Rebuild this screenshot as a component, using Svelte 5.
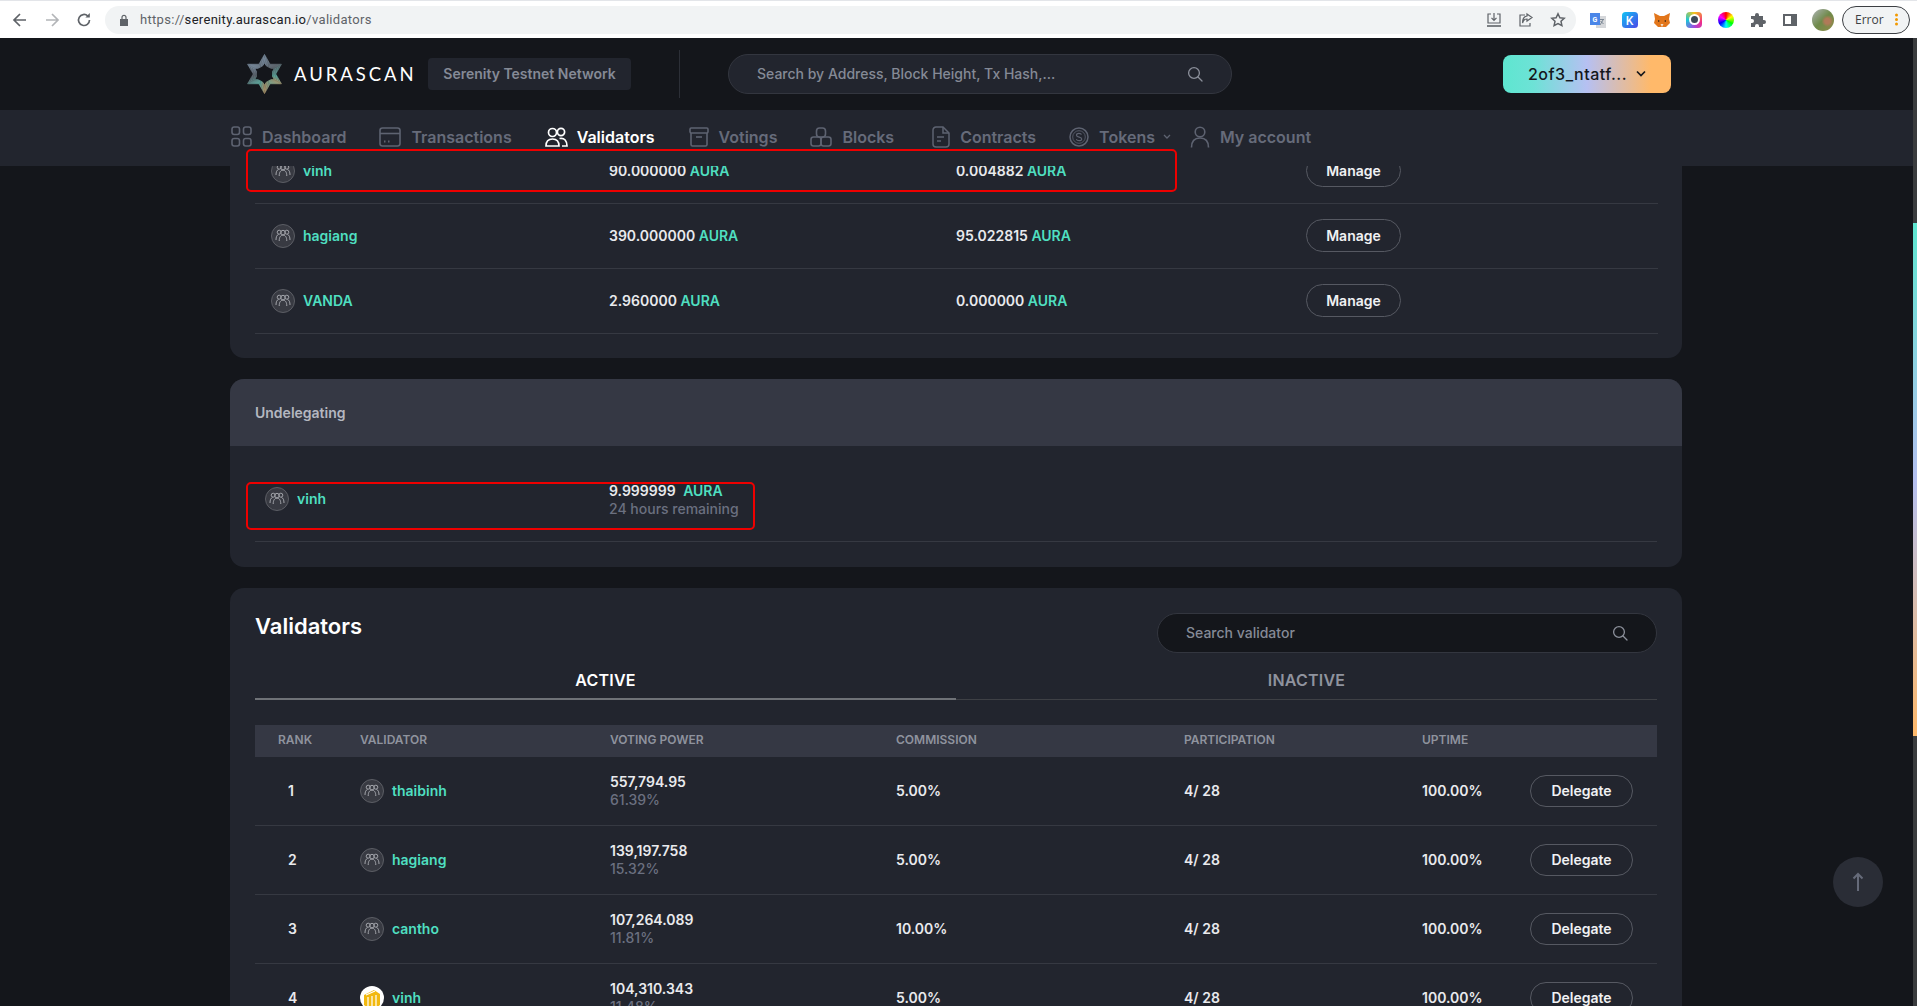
<script>
  const scales = [1, 0.94, 0.88, 0.82, 0.76, 0.7, 0.64, 0.58];
  const star = (s) => {
    const pts = [];
    for (let i = 0; i < 12; i++) {
      const r = (i % 2 === 0 ? 20 : 11.5) * s;
      const a = (Math.PI / 6) * i - Math.PI / 2;
      pts.push((20 + r * Math.cos(a)).toFixed(2) + ',' + (20 + r * Math.sin(a)).toFixed(2));
    }
    return pts.join(' ');
  };
  const delegations = [
    { name: 'vinh', amount: '90.000000', reward: '0.004882' },
    { name: 'hagiang', amount: '390.000000', reward: '95.022815' },
    { name: 'VANDA', amount: '2.960000', reward: '0.000000' }
  ];
  const validators = [
    { rank: 1, name: 'thaibinh', power: '557,794.95', pct: '61.39%', comm: '5.00%' },
    { rank: 2, name: 'hagiang', power: '139,197.758', pct: '15.32%', comm: '5.00%' },
    { rank: 3, name: 'cantho', power: '107,264.089', pct: '11.81%', comm: '10.00%' },
    { rank: 4, name: 'vinh', power: '104,310.343', pct: '11.48%', comm: '5.00%', gold: true }
  ];
</script>

{#snippet avatar(gold)}
  {#if gold}
    <svg class="avatar" viewBox="0 0 24 24">
      <circle cx="12" cy="12" r="12" fill="#fff" />
      <path d="M4 9 14 4l6 4v11l-4 3H8l-4-3z" fill="#f2b90f" />
      <path d="M8 11v10M12 10v12M16 9v12M6 9l9-4" stroke="#fff" stroke-width="1.2" fill="none" />
    </svg>
  {:else}
    <svg class="avatar" viewBox="0 0 24 24">
      <circle cx="12" cy="12" r="11.5" fill="#383a42" stroke="#5c5e65" />
      <g fill="none" stroke="#a4a6ac" stroke-width="1">
        <circle cx="12" cy="8.6" r="2.3" />
        <circle cx="8.2" cy="8.2" r="2" />
        <circle cx="15.8" cy="8.2" r="2" />
        <path d="M8.2 17c0-4 1.5-5.8 3.8-5.8s3.8 1.8 3.8 5.8" />
        <path d="M5 16c0-3 .8-5 2.6-5.6M19 16c0-3-.8-5-2.6-5.6" />
      </g>
    </svg>
  {/if}
{/snippet}

{#snippet searchIcon()}
  <svg class="search-icon" viewBox="0 0 16 16" fill="none" stroke="#8b8f9a" stroke-width="1.3">
    <circle cx="7" cy="7" r="5.4" />
    <path d="M11 11l4 4" stroke-linecap="round" />
  </svg>
{/snippet}

<div class="page">
  <div class="chrome">
    <svg class="nav-btn" viewBox="0 0 16 16" fill="none" stroke="#5f6368" stroke-width="1.7"><path d="M14 8H2.5M8 2 2 8l6 6" /></svg>
    <svg class="nav-btn" viewBox="0 0 16 16" fill="none" stroke="#b3b5b8" stroke-width="1.7"><path d="M2 8h11.5M8 2l6 6-6 6" /></svg>
    <svg class="nav-btn" viewBox="0 0 16 16" fill="none" stroke="#5f6368" stroke-width="1.7"><path d="M13.5 8a5.5 5.5 0 1 1-1.7-4" /><path d="M13.8 1v4.4H9.4" fill="#5f6368" stroke="none" /></svg>
    <div class="omnibox">
      <svg class="lock" viewBox="0 0 10 12"><path d="M1 5h8v7H1z" fill="#5f6368" /><path d="M3 5V3.4a2 2 0 0 1 4 0V5" fill="none" stroke="#5f6368" stroke-width="1.2" /></svg>
      <span class="url"><span class="dim">https://</span>serenity.aurascan.io<span class="dim">/validators</span></span>
      <div class="omni-icons">
        <svg viewBox="0 0 16 16" fill="none" stroke="#5f6368" stroke-width="1.2"><path d="M5 2H2v9h12V2h-3M8 1v7M5.5 5.8 8 8.3l2.5-2.5" /><path d="M1 14h14" stroke-width="1.6" /></svg>
        <svg viewBox="0 0 16 16" fill="none" stroke="#5f6368" stroke-width="1.2"><path d="M7 3H2v11h10v-3M9 2l5 3.5L9 9V7C6 7 5 9 4.5 11 4.5 7 6 4.5 9 4z" /></svg>
        <svg viewBox="0 0 16 16" fill="none" stroke="#5f6368" stroke-width="1.5"><path d="m8 1.8 1.9 4 4.3.5-3.2 3 .9 4.3L8 11.5l-3.9 2.1.9-4.3-3.2-3 4.3-.5z" /></svg>
      </div>
    </div>
    <div class="extensions">
      <svg viewBox="0 0 16 16"><rect x="6" y="4" width="10" height="12" fill="#d5d7da" /><path d="M9 7.5h5M11.500 7v1M10 13l3-5M10.500 9l3 3" stroke="#7b8794" fill="none" /><rect width="10" height="12" y="1" fill="#4a86e8" /><text x="2.5" y="10" font-size="7" fill="#fff" font-family="Roboto, sans-serif" font-weight="700">G</text></svg>
      <svg viewBox="0 0 16 16"><defs><linearGradient id="kg" x1="0" y1="0" x2="1" y2="1"><stop offset="0" stop-color="#10c4f4" /><stop offset="1" stop-color="#4b46e8" /></linearGradient></defs><rect width="16" height="16" rx="3.5" fill="url(#kg)" /><text x="3.8" y="12.8" font-size="12" fill="#fff" font-family="Roboto, sans-serif" font-weight="500">K</text></svg>
      <svg viewBox="0 0 16 16"><path d="M0 1l6 3h4l6-3-1 6 1 4-4 4H4l-4-4 1-4z" fill="#e2761b" /><path d="M4 8l2 1-2 1zM12 8l-2 1 2 1z" fill="#3a2a1a" /><path d="M6.5 12h3L8 15z" fill="#f4e0cb" /></svg>
      <div class="ring"><span></span></div>
      <div class="wheel"></div>
      <svg viewBox="0 0 16 16"><path d="M1 4h4V3a2 2 0 0 1 4 0v1h4v4h1a2 2 0 0 1 0 4h-1v3H9v-1a2 2 0 0 0-4 0v1H1v-4h1a2 2 0 0 0 0-4H1z" fill="#5f6368" /></svg>
      <svg viewBox="0 0 16 16"><rect x="1" y="2" width="14" height="12" fill="#5f6368" /><rect x="3" y="4" width="6" height="8" fill="#fff" /></svg>
    </div>
    <div class="profile"></div>
    <div class="error-pill"><span>Error</span><i></i></div>
  </div>

  <div class="site">
    <div class="site-main">
      <header class="header">
        <svg class="logo" viewBox="0 0 40 40" fill="none">
          <defs>
            <linearGradient id="lg" x1="0.2" y1="0" x2="0.6" y2="1">
              <stop offset="0" stop-color="#a8c4e0" />
              <stop offset="0.45" stop-color="#76808a" />
              <stop offset="0.72" stop-color="#74d8c8" />
              <stop offset="1" stop-color="#f0b878" />
            </linearGradient>
          </defs>
          {#each scales as s}
            <polygon points={star(s)} stroke="url(#lg)" stroke-width="0.6" stroke-linejoin="round" />
          {/each}
          <polygon points="20,11 27.800,15.500 27.800,24.500 20,29 12.200,24.500 12.200,15.500" fill="#14161b" />
        </svg>
        <span class="wordmark">AURASCAN</span>
        <span class="network">Serenity Testnet Network</span>
        <span class="divider"></span>
        <div class="site-search">
          <span>Search by Address, Block Height, Tx Hash,...</span>
          {@render searchIcon()}
        </div>
        <div class="wallet">
          <span>2of3_ntatf...</span>
          <svg viewBox="0 0 10 8" fill="none" stroke="#14161b" stroke-width="1.7"><path d="M1 1.5 5 5.5l4-4" /></svg>
        </div>
      </header>

      <nav class="nav">
        <a class="nav-item">
          <svg class="ic-w21" viewBox="0 0 21 21" fill="none" stroke="#5e6371" stroke-width="1.6"><rect x="1" y="1" width="7.5" height="7.5" rx="2.2" /><rect x="12.5" y="1" width="7.5" height="7.5" rx="2.2" /><rect x="1" y="12.5" width="7.5" height="7.5" rx="2.2" /><rect x="12.5" y="12.5" width="7.5" height="7.5" rx="2.2" /></svg>
          Dashboard
        </a>
        <a class="nav-item">
          <svg class="ic-w22" viewBox="0 0 22 20" fill="none" stroke="#5e6371" stroke-width="1.6"><rect x="1" y="1" width="20" height="18" rx="2.5" /><path d="M1 6.5h20" /><path d="M5 14.5h1.5M9 14.5h1.5" stroke-width="2" /></svg>
          Transactions
        </a>
        <a class="nav-item active">
          <svg class="ic-w23" viewBox="0 0 23 20" fill="none" stroke="#fff" stroke-width="1.7"><circle cx="7.5" cy="5.5" r="4" /><circle cx="16" cy="5" r="3.6" /><path d="M1 19c0-4 2-7 6.5-7s6.5 3 6.5 7zM14.5 11.5c5 -1 7.5 2.5 7.5 7.5h-5" /></svg>
          Validators
        </a>
        <a class="nav-item">
          <svg class="ic-w20" viewBox="0 0 20 20" fill="none" stroke="#5e6371" stroke-width="1.6"><rect x="1" y="1" width="18" height="5" rx="1.2" /><path d="M2 6v11.5A1.5 1.5 0 0 0 3.5 19h13a1.5 1.5 0 0 0 1.5-1.5V6" /><path d="M7 10h6" /></svg>
          Votings
        </a>
        <a class="nav-item blocks">
          <svg class="ic-w22" viewBox="0 0 22 20" fill="none" stroke="#5e6371" stroke-width="1.6"><rect x="6.5" y="1" width="9" height="9" rx="3" /><rect x="1" y="10" width="10" height="9" rx="2.5" /><rect x="11" y="10" width="10" height="9" rx="2.5" /></svg>
          Blocks
        </a>
        <a class="nav-item">
          <svg class="ic-w18" viewBox="0 0 18 22" fill="none" stroke="#5e6371" stroke-width="1.5"><path d="M11 1H4a3 3 0 0 0-3 3v14a3 3 0 0 0 3 3h10a3 3 0 0 0 3-3V7z" /><path d="M11 1v6h6M5 11h7M5 15h4" /></svg>
          Contracts
        </a>
        <a class="nav-item tokens">
          <svg class="ic-w20" viewBox="0 0 20 20" fill="none" stroke="#5e6371" stroke-width="1.5"><circle cx="10" cy="10" r="9" /><circle cx="10" cy="10" r="6.3" stroke-width="0.8" /><path d="M12.5 7.5C12 6.5 11 6.3 10 6.3 8.5 6.3 7.5 7 7.5 8.2c0 2.600 5.200 1.200 5.200 3.700 0 1.200-1.200 1.800-2.700 1.800-1.200 0-2.200-.5-2.700-1.500" stroke-width="1.2" /></svg>
          Tokens
          <svg class="mini-chev" viewBox="0 0 8 6" fill="none" stroke="#5e6371" stroke-width="1.3"><path d="M1 1l3 3 3-3" /></svg>
        </a>
        <a class="nav-item">
          <svg class="ic-w20b" viewBox="0 0 20 22" fill="none" stroke="#5e6371" stroke-width="1.6"><circle cx="10" cy="6" r="4.8" /><path d="M1.500 21.500c0-6 3-9.500 8.500-9.500s8.500 3.500 8.500 9.500" /></svg>
          My account
        </a>
      </nav>

      <main class="content">
        <div class="scroller">
          <section class="card first">
            {#each delegations as d}
              <div class="del-row">
                <div class="who">{@render avatar(false)}<span class="name">{d.name}</span></div>
                <div class="val">{d.amount} <span class="aura">AURA</span></div>
                <div class="val">{d.reward} <span class="aura">AURA</span></div>
                <button class="btn manage">Manage</button>
              </div>
            {/each}
          </section>

          <section class="card second">
            <div class="card-head">Undelegating</div>
            <div class="und-body">
              <div class="und-row">
                <div class="who">{@render avatar(false)}<span class="name">vinh</span></div>
                <div class="und-val">
                  <div class="val line">9.999999 <span class="aura spaced">AURA</span></div>
                  <div class="muted line">24 hours remaining</div>
                </div>
              </div>
            </div>
          </section>

          <section class="card third">
            <div class="title-row">
              <h2>Validators</h2>
              <div class="val-search">
                <span>Search validator</span>
                {@render searchIcon()}
              </div>
            </div>
            <div class="tabs">
              <div class="tab on">ACTIVE</div>
              <div class="tab">INACTIVE</div>
            </div>
            <div class="table-head">
              <div class="rank-h">RANK</div>
              <div>VALIDATOR</div>
              <div>VOTING POWER</div>
              <div>COMMISSION</div>
              <div>PARTICIPATION</div>
              <div>UPTIME</div>
              <div></div>
            </div>
            {#each validators as v}
              <div class="table-row">
                <div class="rank">{v.rank}</div>
                <div class="who tight">{@render avatar(v.gold)}<span class="name">{v.name}</span></div>
                <div>
                  <div class="val line">{v.power}</div>
                  <div class="muted line">{v.pct}</div>
                </div>
                <div class="val">{v.comm}</div>
                <div class="val">4/ 28</div>
                <div class="val">100.00%</div>
                <div><button class="btn delegate">Delegate</button></div>
              </div>
            {/each}
          </section>
        </div>
      </main>
    </div>
    <div class="scrollbar"><div class="thumb"></div></div>
  </div>

  <div class="mark mark-a"></div>
  <div class="mark mark-b"></div>
  <button class="to-top" aria-label="Back to top">
    <svg viewBox="0 0 12 20" fill="none" stroke="#666b7a" stroke-width="2"><path d="M6 19V2M1.5 6.5 6 2l4.500 4.500" /></svg>
  </button>
</div>

<style>
  :global(body) {
    margin: 0;
    background: #14161b;
    font-family: Inter, "Liberation Sans", sans-serif;
    overflow: hidden;
  }
  button { font-family: inherit; }

  .page {
    position: relative;
    width: 1917px;
    height: 1006px;
    overflow: hidden;
    display: flex;
    flex-direction: column;
  }

  /* Browser chrome */
  .chrome {
    height: 38px;
    flex: none;
    box-sizing: border-box;
    background: #fff;
    display: flex;
    align-items: center;
    padding: 1px 0 1px 12px;
    border-top: 1px solid #e3e5e9;
  }
  .nav-btn { width: 16px; height: 16px; margin-right: 16px; flex: none; }
  .omnibox {
    width: 1471px;
    height: 28px;
    margin-left: -3px;
    flex: none;
    box-sizing: border-box;
    background: #f1f3f4;
    border-radius: 14px;
    display: flex;
    align-items: center;
    padding-left: 14px;
  }
  .lock { width: 10px; height: 12px; margin-right: 11px; margin-left: 0; }
  .url { font: 13px Roboto, sans-serif; color: #202124; letter-spacing: 0.31px; }
  .dim { color: #5f6368; }
  .omni-icons { margin-left: auto; display: flex; gap: 16px; padding-right: 10px; }
  .omni-icons svg { width: 16px; height: 16px; }
  .extensions { display: flex; gap: 16px; align-items: center; margin-left: 14px; }
  .extensions svg, .wheel, .ring { width: 16px; height: 16px; display: block; }
  .wheel { border-radius: 50%; background: conic-gradient(#f00, #ff0, #0f0, #0ff, #00f, #f0f, #f00); }
  .ring {
    border-radius: 4px;
    background: conic-gradient(#f5c518, #f02a8a 30%, #a04ae0 50%, #18c8d8 75%, #f5c518);
    display: flex; align-items: center; justify-content: center;
  }
  .ring span {
    width: 7px; height: 7px; border-radius: 50%;
    background: #3c4a58;
    border: 2px solid #fff;
  }
  .profile {
    width: 22px; height: 22px; border-radius: 50%; margin-left: 14px; flex: none;
    background:
      radial-gradient(circle at 70% 55%, #b07a58 0 14%, transparent 30%),
      linear-gradient(135deg, #a3aca2 10%, #6f8a4a 50%, #8a8a48 90%);
  }
  .error-pill {
    width: 68px; height: 28px; margin-left: 8px; flex: none;
    box-sizing: border-box;
    border: 1px solid #3c3f43;
    border-radius: 14px;
    background: #f1f3f4;
    display: flex; align-items: center; justify-content: space-between;
    padding: 0 11px 0 12px;
    font: 12px "Open Sans", sans-serif; color: #3c3f43;
  }
  .error-pill i {
    width: 3px; height: 3px; border-radius: 50%;
    background: #f29900;
    box-shadow: 0 -4.5px 0 #f29900, 0 4.5px 0 #f29900;
  }

  /* Site */
  .site { flex: 1; min-height: 0; display: flex; }
  .site-main { flex: 1; min-width: 0; display: flex; flex-direction: column; }
  .scrollbar { width: 4px; flex: none; background: #3a3c3e; padding-top: 185px; box-sizing: border-box; }
  .thumb { height: 513px; background: linear-gradient(180deg, #5ee6d0, #b5c0f0 50%, #ffb96a); }

  .header {
    height: 72px; flex: none;
    background: #14161b;
    display: flex; align-items: center;
    padding-left: 245px;
  }
  .logo { width: 39px; height: 40px; flex: none; }
  .wordmark {
    margin-left: 10px;
    font: 400 18.5px Lato, sans-serif;
    letter-spacing: 2.95px;
    color: #fff;
    width: 130px;
    white-space: nowrap;
  }
  .network {
    margin-left: 4px;
    width: 203px; height: 32px;
    box-sizing: border-box;
    padding-bottom: 2px;
    display: flex; align-items: center; justify-content: center;
    background: #22252e;
    border-radius: 4px;
    color: #858a96;
    font-size: 14px; font-weight: 600;
  }
  .divider { width: 1px; height: 48px; background: #2c2f37; margin-left: 48px; }
  .site-search {
    margin-left: 48px;
    width: 504px; height: 40px;
    box-sizing: border-box;
    border: 1px solid #33363f;
    background: #22252e;
    border-radius: 20px;
    display: flex; align-items: center; justify-content: space-between;
    padding: 0 28px 0 28px;
    color: #858a96; font-size: 14px; font-weight: 500;
  }
  .site-search span, .val-search span { margin-top: -2px; }
  .search-icon { width: 16px; height: 16px; flex: none; }
  .wallet {
    margin-left: 271px;
    width: 168px; height: 38px;
    box-sizing: border-box;
    border-radius: 8px;
    background: linear-gradient(90deg, #5ee6d0 0%, #6de2d6 18%, #b6c0f2 50%, #ffb96a 88%);
    display: flex; align-items: center;
    padding-left: 25px;
    color: #14161b; font-size: 16px; font-weight: 500; letter-spacing: 0.5px;
  }
  .wallet svg { width: 10px; height: 8px; margin-left: 9px; }

  .nav {
    height: 56px; flex: none;
    background: #22252e;
    display: flex; align-items: center; gap: 33px;
    padding-left: 231px;
    box-sizing: border-box;
    padding-bottom: 3px;
    position: relative;
  }
  .nav-item {
    display: flex; align-items: center; gap: 10px;
    color: #666b7a; font-size: 16px; font-weight: 600;
    line-height: 24px;
  }
  .nav-item.active { color: #fff; gap: 9px; margin-right: 1px; }
  .nav-item.blocks { margin-right: 5px; }
  .nav-item.tokens { margin-right: -14px; }
  .ic-w21 { width: 21px; height: 21px; }
  .ic-w22 { width: 22px; height: 20px; }
  .ic-w23 { width: 23px; height: 20px; }
  .ic-w20 { width: 20px; height: 20px; }
  .ic-w18 { width: 18px; height: 22px; }
  .ic-w20b { width: 20px; height: 22px; }
  .mini-chev { width: 8px; height: 6px; margin-left: -2px; }

  .content { flex: 1; min-height: 0; overflow: hidden; background: #14161b; }
  .scroller { margin: -27px 0 0 230px; width: 1452px; display: flex; flex-direction: column; gap: 21px; }
  .card { background: #22252e; border-radius: 14px; box-sizing: border-box; }
  .card.first { padding: 0 24px 24px 25px; border-radius: 0 0 14px 14px; }
  .card.second { padding-bottom: 25px; overflow: hidden; }
  .card.third { padding: 25px 25px 0 25px; }

  .del-row {
    height: 65px;
    box-sizing: border-box;
    padding-bottom: 1px;
    border-bottom: 1px solid #363942;
    display: grid;
    grid-template-columns: 354px 347px 350px 95px;
    align-items: center;
  }
  .who { display: flex; align-items: center; gap: 8px; padding-left: 16px; }
  .who.tight { padding-left: 0; }
  .avatar { width: 24px; height: 24px; flex: none; display: block; }
  .name { color: #4fdfc0; font-size: 14px; font-weight: 600; }
  .val { color: #e9eaed; font-size: 14px; font-weight: 600; }
  .aura { color: #4fdfc0; }
  .aura.spaced { margin-left: 4px; }
  .muted { color: #6b7080; font-size: 14px; font-weight: 500; }
  .line { line-height: 18px; }

  .btn {
    background: transparent;
    border: 1px solid #565962;
    border-radius: 17px;
    color: #f0f1f3;
    font-size: 14px; font-weight: 600;
    height: 33px;
    padding: 0;
  }
  .manage { width: 95px; }
  .delegate { width: 103px; height: 32px; border-radius: 16px; display: block; }

  .card-head {
    height: 67px;
    background: #353844;
    display: flex; align-items: center;
    padding-left: 25px;
    color: #b4b7c0; font-size: 14px; font-weight: 600;
  }
  .und-body { padding: 36px 25px 0; }
  .und-row {
    display: grid;
    grid-template-columns: 354px 1fr;
    height: 60px;
    border-bottom: 1px solid #363942;
    box-sizing: border-box;
  }
  .und-row .who { padding-left: 10px; align-items: flex-start; margin-top: 5px; }
  .und-row .name { line-height: 24px; }

  .title-row { display: flex; align-items: flex-start; justify-content: space-between; height: 40px; }
  h2 { margin: -1px 0 0; color: #fff; font-size: 22px; font-weight: 600; line-height: 28px; }
  .val-search {
    width: 500px; height: 40px;
    box-sizing: border-box;
    border: 1px solid #33363f;
    border-radius: 20px;
    background: #14161b;
    display: flex; align-items: center; justify-content: space-between;
    padding: 0 28px;
    color: #858a96; font-size: 14px; font-weight: 500;
  }
  .tabs { display: grid; grid-template-columns: 1fr 1fr; height: 47px; }
  .tab {
    display: flex; align-items: center; justify-content: center;
    box-sizing: border-box;
    padding-top: 8px;
    border-bottom: 1px solid #3e4045;
    color: #8f939e; font-size: 16px; font-weight: 600; letter-spacing: 0.2px;
  }
  .tab.on { color: #fff; border-bottom: 2px solid #6f7277; }

  .table-head, .table-row {
    display: grid;
    grid-template-columns: 105px 250px 286px 288px 238px 108px 1fr;
    align-items: center;
  }
  .table-head {
    margin-top: 25px;
    height: 32px;
    box-sizing: border-box;
    padding-bottom: 3px;
    background: #353844;
    color: #8f939e; font-size: 12px; font-weight: 600;
  }
  .rank-h { padding-left: 23px; }
  .table-row { height: 69px; box-sizing: border-box; padding-bottom: 1px; border-bottom: 1px solid #363942; }
  .rank { padding-left: 33px; color: #e9eaed; font-size: 14px; font-weight: 600; }

  /* Overlays */
  .mark { position: absolute; box-sizing: border-box; border: 2px solid #ee0000; border-radius: 5px; }
  .mark-a { left: 246px; top: 149px; width: 931px; height: 43px; }
  .mark-b { left: 246px; top: 482px; width: 509px; height: 48px; }
  .to-top {
    position: absolute; left: 1833px; top: 857px;
    width: 50px; height: 50px;
    border-radius: 50%; border: none;
    background: #2a2d36;
    display: flex; align-items: center; justify-content: center;
  }
  .to-top svg { width: 12px; height: 20px; }
</style>
